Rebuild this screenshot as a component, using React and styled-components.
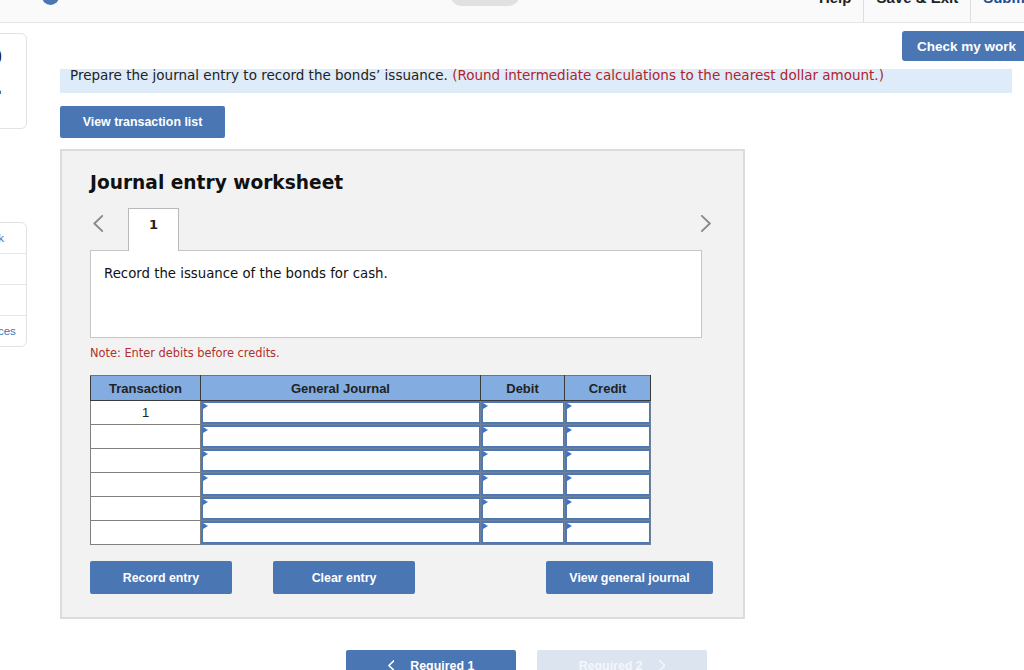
import React from 'react';
import styled, {createGlobalStyle} from 'styled-components';

const GlobalStyle = createGlobalStyle`
  html, body {
    margin: 0;
    padding: 0;
    background: #fff;
    overflow: hidden;
  }
  body {
    font-family: "DejaVu Sans", Verdana, sans-serif;
    color: #222;
  }
`;

const BLUE = '#4a76b4';

const TopBar = styled.header`
  display: flex;
  align-items: stretch;
  height: 60px;
  margin-top: -38px;
  background: #fafafa;
  border-bottom: 1px solid #e6e6e6;
`;

const TopLeft = styled.div`
  display: flex;
  align-items: flex-end;
  width: 420px;
  padding-left: 42px;
  padding-bottom: 17px;
  box-sizing: border-box;
`;

const InfoDot = styled.span`
  width: 17px;
  height: 17px;
  border-radius: 50%;
  background: ${BLUE};
`;

const Pill = styled.div`
  align-self: flex-start;
  width: 70px;
  height: 44px;
  margin-left: 30px;
  border-radius: 0 0 12px 12px;
  background: #e2e0e3;
`;

const TopRight = styled.nav`
  display: flex;
  margin-left: auto;
  margin-right: -22px;
`;

const TopLink = styled.a`
  display: flex;
  align-items: flex-end;
  padding: 0 12px 16px;
  font-family: "Liberation Sans", Arial, sans-serif;
  font-weight: bold;
  font-size: 15px;
  line-height: 17px;
  color: ${({ primary }) => primary ? '#1d4f91' : '#222'};
  border-left: ${({ divided }) => divided ? '1px solid #dedede' : 'none'};
`;

const Body = styled.div`
  display: flex;
  gap: 33px;
  padding-right: 12px;
`;

const Sidebar = styled.aside`
  display: flex;
  flex-direction: column;
  width: 60px;
  margin-left: -33px;
  padding-top: 10px;
  flex-shrink: 0;
`;

const SideCard = styled.div`
  border: 1px solid #e3e3e3;
  border-radius: 6px;
  background: #fff;
  margin-bottom: ${({ gap }) => gap || 0}px;
`;

const ScoreCard = styled(SideCard)`
  display: flex;
  flex-direction: column;
  align-items: flex-end;
  height: 96px;
  padding: 8px 24px 0 0;
  box-sizing: border-box;
  font-family: "Liberation Sans", Arial, sans-serif;
  font-weight: bold;
  font-size: 22px;
  line-height: 30px;
  color: #222;
`;

const SideRow = styled.div`
  height: 30px;
  line-height: 30px;
  text-indent: ${({ indent }) => indent}px;
  font-family: "Liberation Sans", Arial, sans-serif;
  font-size: 11.5px;
  color: #3e72b8;
  white-space: nowrap;
  border-top: ${({ first }) => first ? 'none' : '1px solid #e6e6e6'};
`;

const Content = styled.main`
  flex: 1;
  display: flex;
  flex-direction: column;
  align-items: flex-start;
`;

const CheckButton = styled.button`
  align-self: flex-end;
  margin-top: 8px;
  margin-right: -19px;
  height: 30px;
  padding: 0 15px;
  border: none;
  border-radius: 3px 0 0 3px;
  background: ${BLUE};
  color: #fff;
  font-family: "Liberation Sans", Arial, sans-serif;
  font-weight: bold;
  font-size: 13.5px;
`;

const Instruction = styled.div`
  align-self: stretch;
  margin-top: 8px;
  height: 24px;
  padding-left: 10px;
  background: #deebf8;
  font-size: 13.5px;
  line-height: 12px;
  color: #222;
  box-sizing: border-box;
`;

const RedText = styled.span`
  color: #b0242a;
`;

const BlueButton = styled.button`
  height: ${({ h }) => h || 33}px;
  width: ${({ w }) => w}px;
  padding: 0;
  border: none;
  border-radius: 2px;
  background: ${BLUE};
  color: #fff;
  font-family: "Liberation Sans", Arial, sans-serif;
  font-weight: bold;
  font-size: 12.4px;
`;

const TransactionButton = styled(BlueButton)`
  margin-top: 13px;
`;

const Panel = styled.section`
  margin-top: 11px;
  width: 685px;
  box-sizing: border-box;
  padding: 20px 41px 23px 28px;
  background: #f2f2f2;
  border: 2px solid #dcdcdc;
`;

const Title = styled.h2`
  margin: 0;
  font-size: 18.6px;
  line-height: 24px;
  font-weight: bold;
  color: #111;
`;

const TabsRow = styled.div`
  display: flex;
  align-items: flex-start;
  margin-top: 13px;
  margin-right: -12px;
`;

const Chevron = styled.span`
  display: flex;
  align-items: center;
  justify-content: center;
  width: 16px;
  height: 30px;
  margin: ${({ side }) => side === 'left' ? '0 22px 0 0' : '0 0 0 auto'};
`;

const Tab = styled.div`
  width: 51px;
  height: 43px;
  margin-bottom: -1px;
  box-sizing: border-box;
  padding-top: 8px;
  text-align: center;
  background: #fff;
  border: 1px solid #b9b9b9;
  border-bottom: none;
  font-weight: bold;
  font-size: 13px;
  position: relative;
  z-index: 1;
`;

const EntryBox = styled.div`
  height: 88px;
  box-sizing: border-box;
  padding: 15px 13px;
  background: #fff;
  border: 1px solid #c6c6c6;
  font-size: 13.3px;
  color: #111;
`;

const Note = styled.p`
  margin: 8px 0 0;
  font-size: 11.4px;
  line-height: 14px;
  color: #b0302e;
`;

const Table = styled.table`
  margin-top: 15px;
  border-collapse: collapse;
  table-layout: fixed;
  width: 556px;
  font-family: "Liberation Sans", Arial, sans-serif;
  border: 1px solid #747474;
`;

const HeadCell = styled.th`
  width: ${({ w }) => w}px;
  height: 24px;
  padding: 0;
  background: #83ade0;
  border: 1px solid #3b3b3b;
  border-top-color: #747474;
  font-size: 13px;
  font-weight: bold;
  color: #222;
`;

const TxCell = styled.td`
  height: 23px;
  padding: 0;
  background: #fff;
  border: 1px solid #808080;
  text-align: center;
  vertical-align: middle;
  font-size: 13px;
  color: #222;
`;

const InputCell = styled.td`
  height: 23px;
  padding: 0;
  background: #6d819c;
  border: 1px solid #6d819c;
`;

const InputBox = styled.div`
  position: relative;
  height: 23px;
  box-sizing: border-box;
  background: #fff;
  border: 1px solid #4f78b6;
  border-width: 2px 1px 2px 2px;

  &::before {
    content: '';
    position: absolute;
    top: 0;
    left: 0;
    border-style: solid;
    border-width: 3px 0 3px 5px;
    border-color: transparent transparent transparent #3f74c2;
  }
`;

const Actions = styled.div`
  display: flex;
  margin-top: 16px;
  margin-right: -11px;
  gap: 41px;
`;

const PushRight = styled.div`
  margin-left: auto;
`;

const BottomNav = styled.div`
  display: flex;
  gap: 21px;
  margin-top: 31px;
  margin-left: 286px;
`;

const NavButton = styled.button`
  display: flex;
  align-items: center;
  justify-content: center;
  gap: 16px;
  width: 170px;
  height: 34px;
  padding: 0 0 3px;
  border: none;
  border-radius: 2px;
  background: ${({ disabled }) => disabled ? '#dbe4ef' : BLUE};
  color: ${({ disabled }) => disabled ? '#f4f7fb' : '#fff'};
  font-family: "Liberation Sans", Arial, sans-serif;
  font-weight: bold;
  font-size: 12.4px;
`;

const ChevronIcon = ({ dir, color = '#8a8a8a', size = 14, stroke = 1.6 }) => (
  <svg width={size * 0.6} height={size} viewBox="0 0 6 10" fill="none">
    <polyline
      points={dir === 'left' ? '5.5,0.5 0.8,5 5.5,9.5' : '0.5,0.5 5.2,5 0.5,9.5'}
      stroke={color}
      strokeWidth={stroke * 0.7}
      strokeLinecap="round"
      strokeLinejoin="round"
    />
  </svg>
);

const columns = [
  { label: 'Transaction', w: 109 },
  { label: 'General Journal', w: 279 },
  { label: 'Debit', w: 83 },
  { label: 'Credit', w: 85 },
];

const rows = ['1', '', '', '', '', ''];

export default function App() {
  return (
    <>
      <GlobalStyle />
      <TopBar>
        <TopLeft>
          <InfoDot />
        </TopLeft>
        <Pill />
        <TopRight>
          <TopLink>Help</TopLink>
          <TopLink divided>Save &amp; Exit</TopLink>
          <TopLink divided primary>Submit</TopLink>
        </TopRight>
      </TopBar>

      <Body>
        <Sidebar>
          <ScoreCard gap={93}>
            <span>0</span>
            <span>.</span>
          </ScoreCard>
          <SideCard>
            <SideRow first indent={-10}>Textbook</SideRow>
            <SideRow indent={-10}>Print</SideRow>
            <SideRow indent={-10}>Hint</SideRow>
            <SideRow indent={-11}>References</SideRow>
          </SideCard>
        </Sidebar>

        <Content>
          <CheckButton>Check my work</CheckButton>
          <Instruction>
            Prepare the journal entry to record the bonds’ issuance.{' '}
            <RedText>(Round intermediate calculations to the nearest dollar amount.)</RedText>
          </Instruction>

          <TransactionButton w={165} h={32}>View transaction list</TransactionButton>

          <Panel>
            <Title>Journal entry worksheet</Title>

            <TabsRow>
              <Chevron side="left"><ChevronIcon dir="left" size={17} /></Chevron>
              <Tab>1</Tab>
              <Chevron side="right"><ChevronIcon dir="right" size={17} /></Chevron>
            </TabsRow>
            <EntryBox>Record the issuance of the bonds for cash.</EntryBox>

            <Note>Note: Enter debits before credits.</Note>

            <Table>
              <thead>
                <tr>
                  {columns.map(c => <HeadCell key={c.label} w={c.w}>{c.label}</HeadCell>)}
                </tr>
              </thead>
              <tbody>
                {rows.map((tx, i) => (
                  <tr key={i}>
                    <TxCell>{tx}</TxCell>
                    <InputCell><InputBox /></InputCell>
                    <InputCell><InputBox /></InputCell>
                    <InputCell><InputBox /></InputCell>
                  </tr>
                ))}
              </tbody>
            </Table>

            <Actions>
              <BlueButton w={142}>Record entry</BlueButton>
              <BlueButton w={142}>Clear entry</BlueButton>
              <PushRight>
                <BlueButton w={167}>View general journal</BlueButton>
              </PushRight>
            </Actions>
          </Panel>

          <BottomNav>
            <NavButton>
              <ChevronIcon dir="left" color="#fff" size={11} stroke={2} />
              Required 1
            </NavButton>
            <NavButton disabled>
              Required 2
              <ChevronIcon dir="right" color="#f4f7fb" size={11} stroke={2} />
            </NavButton>
          </BottomNav>
        </Content>
      </Body>
    </>
  );
}
